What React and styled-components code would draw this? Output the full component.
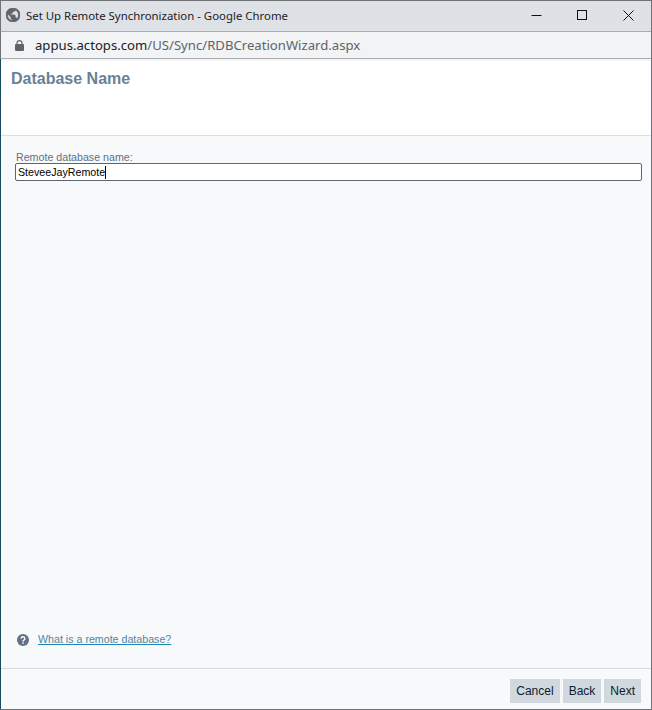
import React from "react"
import styled, { createGlobalStyle } from "styled-components"

const Global = createGlobalStyle`
	html, body, #root {
		margin: 0;
		padding: 0;
		height: 100%;
	}
	body {
		overflow: hidden;
		font-family: "Liberation Sans", Arial, sans-serif;
	}
`
const Chrome = styled.div`
	box-sizing: border-box;
	width: 652px;
	height: 710px;
	display: flex;
	flex-direction: column;
	border: solid 1px #6f7378;
	border-left: none;
	background: #f7f9fb;
`
const TitleBar = styled.div`
	box-sizing: border-box;
	height: 31px;
	flex-shrink: 0;
	display: flex;
	align-items: center;
	padding: 0 0 2px 5px;
	background: #dee1e6;
	border-bottom: solid 1px #a9abae;
	border-left: solid 1px #6f7378;
`
const Title = styled.div`
	flex-grow: 1;
	margin-left: 6px;
	font-family: "Noto Sans", sans-serif;
	font-size: 11.4px;
	color: #202124;
`
const WinButton = styled.div`
	width: 46px;
	height: 28px;
	display: flex;
	align-items: center;
	justify-content: center;
`
const UrlBar = styled.div`
	box-sizing: border-box;
	height: 27px;
	flex-shrink: 0;
	display: flex;
	align-items: center;
	padding-left: 14px;
	background: #f1f3f4;
	border-bottom: solid 1px #a9abae;
	border-left: solid 1px #6f7378;
`
const Url = styled.div`
	margin-left: 11px;
	font-family: "Noto Sans", sans-serif;
	font-size: 13.15px;
	color: #5f6368;
	span {
		color: #202124;
	}
`
const Page = styled.div`
	flex-grow: 1;
	display: flex;
	flex-direction: column;
	border-left: solid 1px #17495f;
`
const Header = styled.div`
	box-sizing: border-box;
	height: 77px;
	flex-shrink: 0;
	padding: 11px 10px 0;
	background: #fff;
	border-bottom: solid 1px #d9dfe2;
	box-shadow: inset 0 2px 0 #f4f5f6;
`
const Heading = styled.h1`
	margin: 0;
	font-size: 16px;
	line-height: 18px;
	font-weight: bold;
	color: #6a8096;
`
const Body = styled.div`
	flex-grow: 1;
	display: flex;
	flex-direction: column;
	padding: 16px 9px 0 15px;
`
const Label = styled.label`
	display: block;
	font-size: 10.67px;
	line-height: 11px;
	color: #5f7183;
`
const Input = styled.div`
	box-sizing: border-box;
	height: 18px;
	display: flex;
	align-items: center;
	padding-left: 2px;
	margin-left: -1px;
	background: #fff;
	border: solid 1px #5b6670;
	border-radius: 2px;
	font-size: 10.67px;
	color: #000;
`
const Caret = styled.span`
	display: inline-block;
	width: 1px;
	height: 13px;
	background: #000;
`
const Help = styled.div`
	margin-top: auto;
	margin-left: 1px;
	margin-bottom: 22px;
	display: flex;
	align-items: center;
	gap: 9px;
`
const HelpIcon = styled.svg`
	width: 12px;
	height: 12px;
	margin-top: 2px;
`
const HelpLink = styled.a`
	font-size: 10.67px;
	line-height: 14px;
	color: #4f86a8;
	text-decoration: underline;
	text-decoration-color: #1f86b5;
`
const Footer = styled.div`
	box-sizing: border-box;
	height: 41px;
	flex-shrink: 0;
	display: flex;
	justify-content: flex-end;
	align-items: flex-start;
	gap: 3px;
	padding: 10px 10px 0 0;
	border-top: solid 1px #d3dce0;
`
const Button = styled.div`
	box-sizing: border-box;
	height: 24px;
	padding: 0 6px;
	display: flex;
	align-items: center;
	background: #d1d9de;
	font-size: 12px;
	color: #0b1a2e;
`

export default function App() {
	return (
		<>
			<Global />
			<Chrome>
				<TitleBar>
					<svg width="14" height="14" viewBox="2 2 20 20">
						<path
							fill="#5f6368"
							stroke="#5f6368"
							strokeWidth="1.2"
							d="M12 2C6.48 2 2 6.48 2 12s4.48 10 10 10 10-4.48 10-10S17.52 2 12 2zm-1 17.93c-3.95-.49-7-3.85-7-7.93 0-.62.08-1.21.21-1.79L9 15v1c0 1.1.9 2 2 2v1.93zm6.9-2.54c-.26-.81-1-1.39-1.9-1.39h-1v-3c0-.55-.45-1-1-1H8v-2h2c.55 0 1-.45 1-1V7h2c1.1 0 2-.9 2-2v-.41c2.93 1.19 5 4.06 5 7.41 0 2.08-.8 3.97-2.1 5.39z"
						/>
					</svg>
					<Title>Set Up Remote Synchronization - Google Chrome</Title>
					<WinButton>
						<svg width="11" height="11" viewBox="0 0 11 11">
							<path d="M0.5 5.5H10.5" stroke="#111" strokeWidth="1" />
						</svg>
					</WinButton>
					<WinButton>
						<svg width="11" height="11" viewBox="0 0 11 11">
							<rect x="0.5" y="0.5" width="9" height="9" fill="none" stroke="#111" strokeWidth="1" />
						</svg>
					</WinButton>
					<WinButton>
						<svg width="11" height="11" viewBox="0 0 11 11">
							<path d="M0.5 0.5 10.5 10.5M10.5 0.5 0.5 10.5" stroke="#111" strokeWidth="1" />
						</svg>
					</WinButton>
				</TitleBar>
				<UrlBar>
					<svg width="9" height="11" viewBox="0 0 9 11">
						<path d="M2 4V2.7a2.5 2.1 0 0 1 5 0V4" fill="none" stroke="#5f6368" strokeWidth="1.2" />
						<rect x="0" y="4" width="9" height="7" rx="1" fill="#5f6368" />
					</svg>
					<Url><span>appus.actops.com</span>/US/Sync/RDBCreationWizard.aspx</Url>
				</UrlBar>
				<Page>
					<Header>
						<Heading>Database Name</Heading>
					</Header>
					<Body>
						<Label>Remote database name:</Label>
						<Input>SteveeJayRemote<Caret /></Input>
						<Help>
							<HelpIcon viewBox="0 0 13 13">
								<circle cx="6.5" cy="6.5" r="6.5" fill="#5f7183" />
								<path d="M4.5 5a2 2 0 1 1 3 1.7c-.7.4-1 .7-1 1.3" fill="none" stroke="#fff" strokeWidth="1.5" />
								<rect x="5.7" y="9" width="1.6" height="1.6" fill="#fff" />
							</HelpIcon>
							<HelpLink>What is a remote database?</HelpLink>
						</Help>
					</Body>
					<Footer>
						<Button>Cancel</Button>
						<Button>Back</Button>
						<Button>Next</Button>
					</Footer>
				</Page>
			</Chrome>
		</>
	)
}
